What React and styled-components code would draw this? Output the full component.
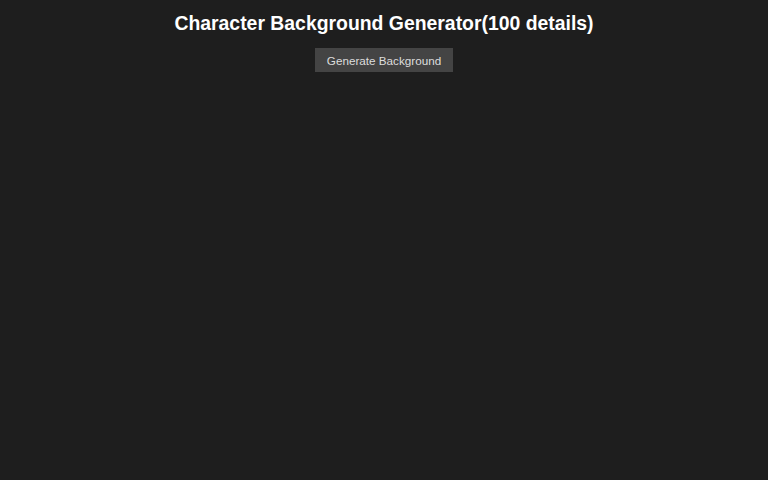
import React from "react";
import styled, { createGlobalStyle } from "styled-components";

const Global = createGlobalStyle`
  html, body { margin: 0; padding: 0; background: #1e1e1e; }
  body { font-family: "Liberation Sans", Arial, sans-serif; color: #fff; }
`;

const Page = styled.div`
  min-height: 480px;
  display: flex;
  flex-direction: column;
  align-items: center;
  padding-top: 12px;
  box-sizing: border-box;
`;

const Title = styled.h1`
  margin: 0 0 13px;
  font-size: 19.4px;
  font-weight: bold;
  line-height: 23px;
  color: #fff;
`;

const Button = styled.button`
  font-family: "Liberation Sans", Arial, sans-serif;
  font-size: 11.7px;
  height: 24px;
  padding: 0 12px;
  background: #444444;
  color: #dddddd;
  border: none;
  cursor: pointer;
`;

export default function App() {
  return (
    <>
      <Global />
      <Page>
        <Title>Character Background Generator(100 details)</Title>
        <Button>Generate Background</Button>
      </Page>
    </>
  );
}
